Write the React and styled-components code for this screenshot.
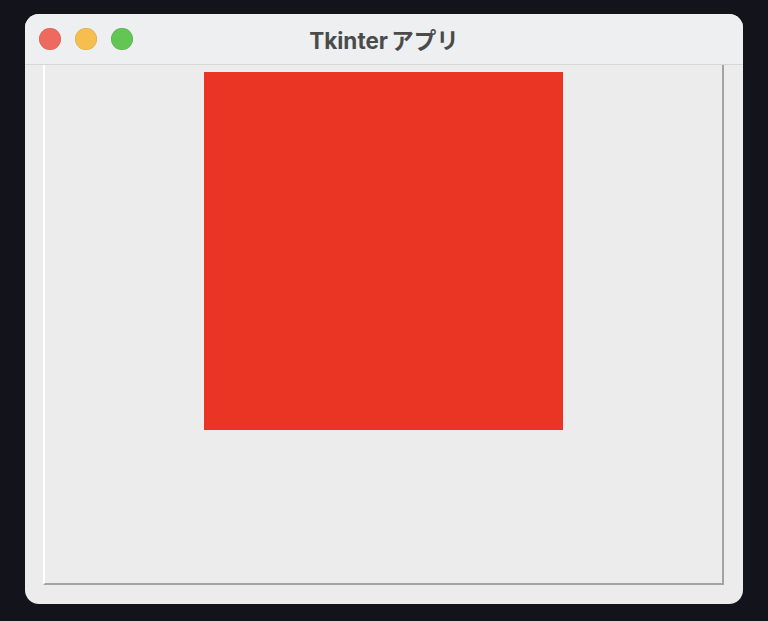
import React from "react";
import styled, { createGlobalStyle } from "styled-components";

const GlobalStyle = createGlobalStyle`
  html, body {
    margin: 0;
    padding: 0;
    background: #13141b;
  }
  body {
    font-family: "Inter", "Noto Sans CJK JP", sans-serif;
  }
`;

const Desktop = styled.div`
  width: 768px;
  height: 621px;
  padding: 14px 0 0 25px;
  box-sizing: border-box;
`;

const Window = styled.div`
  width: 718px;
  height: 590px;
  border-radius: 14px;
  overflow: hidden;
  background: #ececec;
  display: flex;
  flex-direction: column;
`;

const TitleBar = styled.div`
  height: 50px;
  flex-shrink: 0;
  background: #edeff0;
  border-bottom: 1px solid #d6d7d8;
  display: flex;
  align-items: center;
  position: relative;
  padding-left: 14px;
`;

const Lights = styled.div`
  display: flex;
  gap: 14px;
`;

const Light = styled.span`
  width: 22px;
  height: 22px;
  border-radius: 50%;
  background: ${(p) => p.color};
  box-shadow: inset 0 0 0 0.5px rgba(0, 0, 0, 0.12);
`;

const Title = styled.div`
  position: absolute;
  left: 0;
  right: 0;
  text-align: center;
  font-family: "Inter", "Noto Sans CJK JP", sans-serif;
  font-weight: 700;
  font-size: 22.5px;
  word-spacing: -2px;
  color: #4b4b4b;
  pointer-events: none;
`;

const Content = styled.div`
  flex: 1;
  padding: 0 19px 19px 18px;
  display: flex;
`;

const Frame = styled.div`
  flex: 1;
  border-left: 2px solid #ffffff;
  border-bottom: 2px solid #a3a3a3;
  border-right: 2px solid #a3a3a3;
  display: flex;
  justify-content: center;
  align-items: flex-start;
  padding-top: 7px;
`;

const Square = styled.div`
  width: 359px;
  height: 358px;
  background: #eb3524;
`;

export default function App() {
  return (
    <>
      <GlobalStyle />
      <Desktop>
        <Window>
          <TitleBar>
            <Lights>
              <Light color="#ee6a5f" />
              <Light color="#f5be4f" />
              <Light color="#62c554" />
            </Lights>
            <Title>Tkinter アプリ</Title>
          </TitleBar>
          <Content>
            <Frame>
              <Square />
            </Frame>
          </Content>
        </Window>
      </Desktop>
    </>
  );
}
